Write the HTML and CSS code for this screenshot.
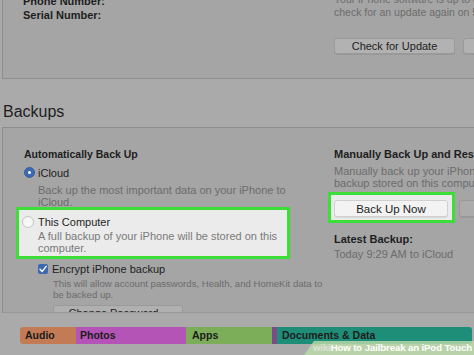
FILE: index.html
```html
<!DOCTYPE html>
<html lang="en">
<head>
    <meta charset="UTF-8">
    <meta name="viewport" content="width=device-width, initial-scale=1.0">
    <title>iPhone Backups</title>
    <link rel="stylesheet" href="styles.css">
</head>
<body>
    <div class="summary">
        <div class="summary-inner">
            <div class="info">
                <p class="label">Phone Number:</p>
                <p class="label">Serial Number:</p>
            </div>
            <div class="update">
                <p class="muted">Your iPhone software is up to date. iTunes will automatically</p>
                <p class="muted">check for an update again on 5/19/2017.</p>
                <div class="btn-row">
                    <button class="btn">Check for Update</button>
                    <button class="btn">Restore iPhone...</button>
                </div>
            </div>
        </div>
    </div>

    <h2 class="section-title">Backups</h2>

    <div class="backups">
        <div class="col col-auto">
            <p class="label">Automatically Back Up</p>
            <div class="option">
                <span class="radio checked"></span>
                <span class="option-name">iCloud</span>
            </div>
            <p class="desc">Back up the most important data on your iPhone to<br>iCloud.</p>

            <div class="highlight highlight-computer">
                <div class="option">
                    <span class="radio"></span>
                    <span class="option-name">This Computer</span>
                </div>
                <p class="desc">A full backup of your iPhone will be stored on this<br>computer.</p>
            </div>

            <div class="option option-encrypt">
                <span class="checkbox">
                    <svg viewBox="0 0 10 10" width="10" height="10"><path d="M2 5.2 L4.2 7.4 L8.2 2.4" fill="none" stroke="#fff" stroke-width="1.4" stroke-linecap="round" stroke-linejoin="round"/></svg>
                </span>
                <span class="option-name">Encrypt iPhone backup</span>
            </div>
            <p class="desc desc-encrypt">This will allow account passwords, Health, and HomeKit data to<br>be backed up.</p>
            <button class="btn btn-password">Change Password...</button>
        </div>

        <div class="col col-manual">
            <p class="label">Manually Back Up and Restore</p>
            <p class="desc">Manually back up your iPhone to this computer or restore a<br>backup stored on this computer.</p>
            <div class="btn-row manual-row">
                <div class="highlight highlight-now">
                    <button class="btn btn-light">Back Up Now</button>
                </div>
                <button class="btn btn-restore">Restore Backup...</button>
            </div>
            <p class="label latest">Latest Backup:</p>
            <p class="latest-value">Today 9:29 AM to iCloud</p>
        </div>
    </div>

    <div class="storage">
        <div class="seg seg-audio">Audio</div>
        <div class="seg seg-photos">Photos</div>
        <div class="seg seg-apps">Apps</div>
        <div class="seg seg-other"></div>
        <div class="seg seg-docs">Documents &amp; Data</div>
    </div>

    <div class="watermark"><span class="wiki">wiki</span><b>How</b> to Jailbreak an iPod Touch</div>
</body>
</html>
```

FILE: styles.css
```css
* {
    margin: 0;
    padding: 0;
    box-sizing: border-box;
}

body {
    width: 474px;
    height: 355px;
    overflow: hidden;
    position: relative;
    background: #aaaaaa;
    color: #1f1f1f;
    font-family: "Liberation Sans", Arial, sans-serif;
    font-size: 11px;
}

p {
    white-space: nowrap;
}

.label {
    font-weight: bold;
    font-size: 11px;
    line-height: 13px;
    color: #1e1e1e;
}

.muted,
.desc {
    color: #6c6c6c;
    line-height: 12px;
}

/* top summary panel */
.summary {
    height: 79px;
    margin-left: 2px;
    border-left: 1px solid #8e8e8e;
    border-bottom: 1px solid #8e8e8e;
    background: #a5a5a5;
    overflow: hidden;
}

.summary-inner {
    display: grid;
    grid-template-columns: 311px 1fr;
    padding-left: 20px;
    margin-top: -7px;
}

.info {
    margin-top: 1px;
}

.info .label {
    line-height: 14px;
}

.muted {
    line-height: 13px;
    font-size: 10.5px;
}

.btn-row {
    display: flex;
    gap: 8px;
    margin-top: 19px;
}

.btn {
    flex: none;
    height: 16px;
    padding: 0 10px;
    width: 121px;
    font-family: inherit;
    font-size: 11px;
    color: #222;
    background: #b2b2b2;
    border: 1px solid #9a9a9a;
    border-radius: 3px;
    box-shadow: 0 1px 0 rgba(0, 0, 0, 0.08);
}

/* backups */
.section-title {
    margin: 23px 0 5px 3px;
    font-size: 16px;
    line-height: 20px;
    font-weight: normal;
    color: #1e1e1e;
}

.backups {
    height: 186px;
    margin-left: 2px;
    border-top: 1px solid #8e8e8e;
    border-left: 1px solid #8e8e8e;
    border-bottom: 1px solid #999;
    background: #a5a5a5;
    display: grid;
    grid-template-columns: 310px 1fr;
    padding: 20px 0 0 21px;
    overflow: hidden;
}

.col-auto > .label {
    font-size: 10.5px;
}

.option {
    display: flex;
    align-items: center;
    gap: 3px;
    height: 13px;
    margin-top: 5px;
}

.option-name {
    font-size: 11px;
    color: #1e1e1e;
}

.col-auto > .desc {
    margin-left: 14px;
    margin-top: 6px;
    line-height: 11.5px;
}

.radio {
    width: 11px;
    height: 11px;
    border-radius: 50%;
    background: #f4f4f4;
    border: 1px solid #9c9c9c;
    flex: none;
}

.radio.checked {
    background: #3d69b0;
    border-color: #35609f;
    position: relative;
}

.radio.checked::after {
    content: "";
    position: absolute;
    left: 3px;
    top: 3px;
    width: 3px;
    height: 3px;
    border-radius: 50%;
    background: #fff;
}

.highlight {
    border: 3px solid #3ddd3a;
    background: #ebebeb;
}

.highlight-computer {
    width: 274px;
    margin: -1px 0 0 -8px;
    height: 52px;
    padding: 5px 0 0 3px;
}

.highlight-computer .radio {
    width: 12px;
    height: 12px;
    background: #f7f7f7;
    border-color: #c4c4c4;
}

.highlight-computer .option {
    margin-top: 0;
    gap: 4px;
}

.highlight-computer .desc {
    margin: 3px 0 0 16px;
    line-height: 11.5px;
    color: #7a7a7a;
}

.option-encrypt {
    margin: 3px 0 0 14px;
    gap: 4px;
}

.checkbox {
    width: 10px;
    height: 10px;
    border-radius: 2px;
    background: #3d69b0;
    display: flex;
}

.col-auto > .desc-encrypt {
    margin: 3px 0 0 29px;
    line-height: 11px;
    font-size: 9.6px;
}

.btn-password {
    margin: 5px 0 0 29px;
    width: 130px;
    background: #b0b0b0;
}

.col-manual .desc {
    margin-top: 4px;
}

.manual-row {
    margin: 3px 0 0 -6px;
    gap: 4px;
    align-items: flex-start;
}

.highlight-now {
    width: 127px;
    height: 31px;
    padding: 5px 0 0 3px;
}

.btn-light {
    width: 114px;
    height: 17px;
    background: #f3f3f3;
    border-color: #d0d0d0;
    font-size: 11.5px;
}

.btn-restore {
    margin-top: 8px;
    height: 17px;
    background: #ababab;
    border-color: #999;
}

.latest {
    margin-top: 10px;
}

.latest-value {
    margin-top: 2px;
    font-size: 11px;
    line-height: 13px;
    color: #6c6c6c;
}

/* storage bar */
.storage {
    display: flex;
    margin: 14px 0 0 20px;
    width: 452px;
    height: 17px;
    border-radius: 3px;
    overflow: hidden;
}

.seg {
    font-size: 10.5px;
    font-weight: bold;
    line-height: 17px;
    color: #1c1c1c;
    padding-left: 5px;
}

.seg-audio { width: 56px; background: #c27b55; }
.seg-photos { width: 110px; padding-left: 4px; background: #b454b6; }
.seg-apps { width: 86px; padding-left: 6px; background: #7cad59; }
.seg-other { width: 5px; padding: 0; background: #7b4a88; }
.seg-docs { flex: 1; background: #1f8e79; }

/* watermark */
.watermark {
    position: absolute;
    right: 0;
    bottom: 0;
    width: 170px;
    height: 14px;
    padding-left: 9px;
    clip-path: polygon(10px 0, 100% 0, 100% 100%, 0 100%);
    background: rgba(190, 220, 170, 0.8);
    color: #fff;
    font-size: 9.6px;
    font-weight: bold;
    letter-spacing: -0.1px;
    line-height: 14px;
    white-space: nowrap;
}

.watermark .wiki {
    color: #dde3d8;
}
```
